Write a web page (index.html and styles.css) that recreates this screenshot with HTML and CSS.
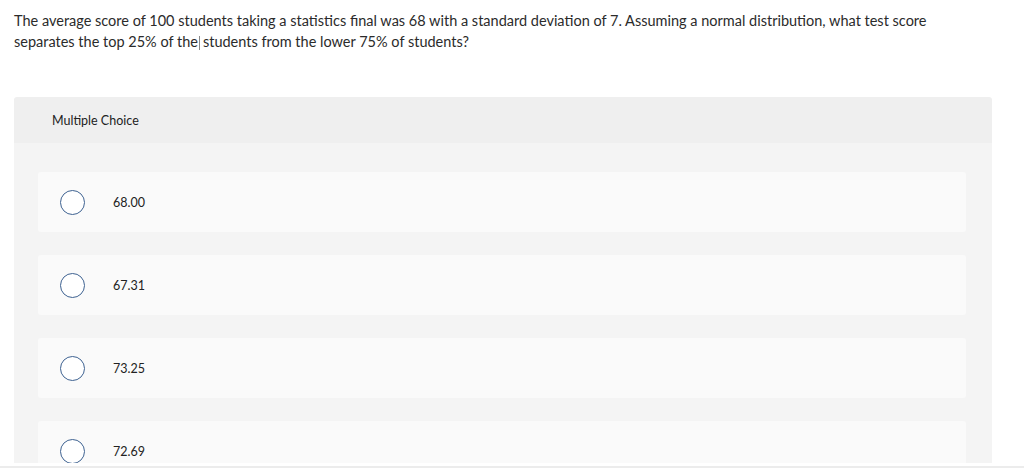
FILE: index.html
```html
<!DOCTYPE html>
<html>
<head>
<meta charset="utf-8">
<link rel="stylesheet" href="styles.css">
</head>
<body>
<div class="page">
  <p class="question">The average score of 100 students taking a statistics final was 68 with a standard deviation of 7. Assuming a normal distribution, what test score separates the top 25% of the<span class="caret"></span>students from the lower 75% of students?</p>
  <section class="panel">
    <header class="panel-head">Multiple Choice</header>
    <div class="options">
      <div class="option"><span class="radio"></span><span class="label">68.00</span></div>
      <div class="option"><span class="radio"></span><span class="label">67.31</span></div>
      <div class="option"><span class="radio"></span><span class="label">73.25</span></div>
      <div class="option"><span class="radio"></span><span class="label">72.69</span></div>
    </div>
  </section>
</div>
<div class="bottom-line"></div>
</body>
</html>
```
FILE: styles.css
```css
html, body {
  margin: 0;
  padding: 0;
  background: #fff;
  overflow: hidden;
  height: 469px;
}
body {
  font-family: Lato, "Open Sans", sans-serif;
  color: #333;
  position: relative;
}
.page {
  padding: 10px 32px 0 14px;
  height: 453px;
  overflow: hidden;
}
.question {
  margin: 0;
  font-size: 14.5px;
  line-height: 21px;
  width: 940px;
  color: #2b2b2b;
}
.caret {
  display: inline-block;
  width: 1px;
  height: 14px;
  background: #888;
  vertical-align: -3px;
  margin: 0 3px 0 1px;
}
.panel {
  margin-top: 45px;
  background: #f4f4f4;
  border-radius: 3px 3px 0 0;
  height: 366px;
  overflow: hidden;
}
.panel-head {
  background: #efefef;
  height: 46px;
  display: flex;
  align-items: center;
  padding-left: 38px;
  font-size: 12.5px;
  color: #222;
  border-radius: 3px 3px 0 0;
}
.options {
  padding: 29px 26px 0 24px;
  display: flex;
  flex-direction: column;
  gap: 23px;
}
.option {
  height: 60px;
  background: #fafafa;
  border-radius: 3px;
  display: flex;
  align-items: center;
  padding-left: 22px;
  flex-shrink: 0;
}
.radio {
  width: 23px;
  height: 23px;
  border: 1px solid #3e6291;
  border-radius: 50%;
  background: #fff;
  flex-shrink: 0;
}
.label {
  margin-left: 28px;
  font-size: 12.5px;
  color: #222;
}
.bottom-line {
  position: absolute;
  left: 0;
  right: 0;
  top: 466px;
  height: 2px;
  background: #ececec;
}
```
